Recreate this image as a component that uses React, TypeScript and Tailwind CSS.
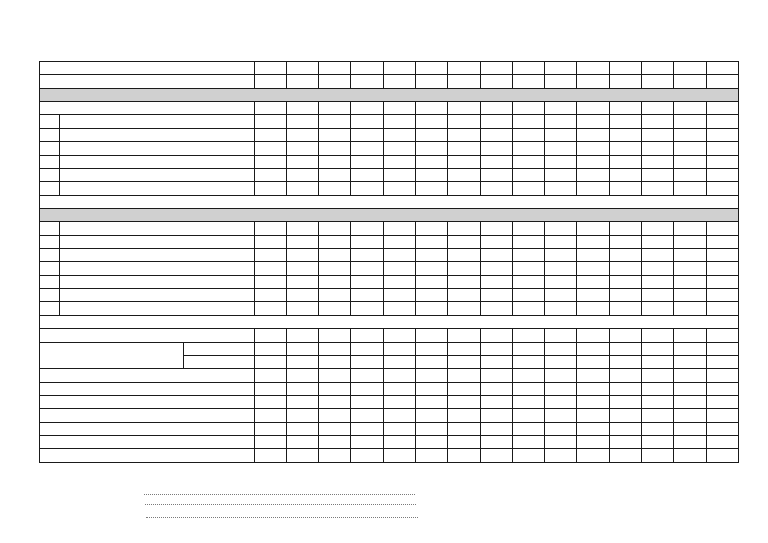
const DATA_COLS = Array.from({ length: 15 }, (_, i) => i);

function Cells() {
    return (
        <>
            {DATA_COLS.map((i) => (
                <td key={i} className="border border-[#1a1a1a] p-0" />
            ))}
        </>
    );
}

function WideRow() {
    return (
        <tr className="h-[13.37px]">
            <td colSpan={3} className="border border-[#1a1a1a] p-0" />
            <Cells />
        </tr>
    );
}

function SubRow() {
    return (
        <tr className="h-[13.37px]">
            <td className="border border-[#1a1a1a] p-0" />
            <td colSpan={2} className="border border-[#1a1a1a] p-0" />
            <Cells />
        </tr>
    );
}

function FullRow({ gray }: { gray?: boolean }) {
    return (
        <tr className="h-[13.37px]">
            <td colSpan={18} className={`border border-[#1a1a1a] p-0 ${gray ? "bg-[#d0d0d0]" : "bg-white"}`} />
        </tr>
    );
}

export default function App() {
    return (
        <div className="w-[768px] h-[543px] bg-white overflow-hidden" style={{ fontFamily: '"Liberation Sans", Arial, sans-serif' }}>
            <div className="pt-[61px] pl-[39px]">
                <table className="table-fixed border-collapse w-[700px]">
                    <colgroup>
                        <col className="w-[19.5px]" />
                        <col className="w-[124px]" />
                        <col className="w-[71px]" />
                        {DATA_COLS.map((i) => (
                            <col key={i} className="w-[32.27px]" />
                        ))}
                    </colgroup>
                    <tbody>
                        <WideRow />
                        <WideRow />
                        <FullRow gray />
                        <WideRow />
                        {Array.from({ length: 6 }, (_, i) => <SubRow key={`a${i}`} />)}
                        <FullRow />
                        <FullRow gray />
                        {Array.from({ length: 7 }, (_, i) => <SubRow key={`b${i}`} />)}
                        <FullRow />
                        <WideRow />
                        <tr className="h-[13.37px]">
                            <td colSpan={2} rowSpan={2} className="border border-[#1a1a1a] p-0" />
                            <td className="border border-[#1a1a1a] p-0" />
                            <Cells />
                        </tr>
                        <tr className="h-[13.37px]">
                            <td className="border border-[#1a1a1a] p-0" />
                            <Cells />
                        </tr>
                        {Array.from({ length: 7 }, (_, i) => <WideRow key={`c${i}`} />)}
                    </tbody>
                </table>
            </div>
            <div className="mt-[31px] flex flex-col">
                <div className="ml-[144px] w-[271px] h-[1px] border-b border-dotted border-[#7a7a7a]" />
                <div className="ml-[145px] mt-[9px] w-[271px] h-[1px] border-b border-dotted border-[#7a7a7a]" />
                <div className="ml-[146px] mt-[12px] w-[272px] h-[1px] border-b border-dotted border-[#7a7a7a]" />
            </div>
        </div>
    );
}
